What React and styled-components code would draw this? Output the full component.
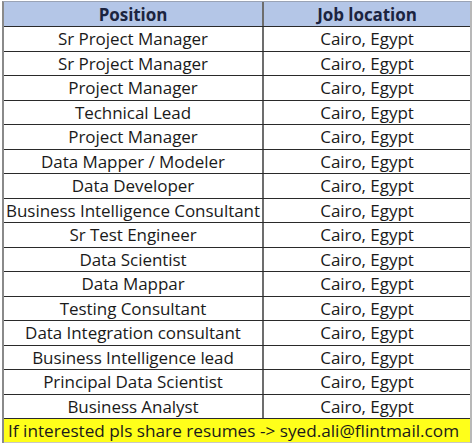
import styled, { createGlobalStyle } from "styled-components";

const GlobalStyle = createGlobalStyle`
  html, body {
    margin: 0;
    padding: 0;
    background: #ffffff;
  }
`;

const jobs = [
  "Sr Project Manager",
  "Sr Project Manager",
  "Project Manager",
  "Technical Lead",
  "Project Manager",
  "Data Mapper / Modeler",
  "Data Developer",
  "Business Intelligence Consultant",
  "Sr Test Engineer",
  "Data Scientist",
  "Data Mappar",
  "Testing Consultant",
  "Data Integration consultant",
  "Business Intelligence lead",
  "Principal Data Scientist",
  "Business Analyst",
];

const Sheet = styled.div`
  width: 470px;
  height: 444px;
  margin-left: 2px;
  padding-top: 1px;
  box-sizing: border-box;
  font-family: "Open Sans", "Liberation Sans", sans-serif;
  color: #1a1a1a;
`;

const Table = styled.div`
  border-left: 2px solid #8a8a8a;
  border-right: 2px solid #b8b8b8;
  border-top: 1px solid #9aa3b5;
`;

const Row = styled.div`
  display: grid;
  grid-template-columns: 258px 1fr;
  height: ${(p) => (p.$header ? 24 : 23.5)}px;
  border-bottom: 1px solid #2a2a2a;
  background: ${(p) => (p.$header ? "#b4c6e7" : "#ffffff")};
`;

const Cell = styled.div`
  display: flex;
  align-items: center;
  justify-content: center;
  font-size: 17px;
  font-weight: ${(p) => (p.$header ? 700 : 400)};
  color: ${(p) => (p.$header ? "#1b2440" : "#1a1a1a")};
  white-space: nowrap;
  letter-spacing: -0.05px;

  & + & {
    border-left: 2px solid #6d6d6d;
  }
`;

const Footer = styled.div`
  height: 23px;
  background: #ffff1a;
  display: flex;
  align-items: center;
  padding-left: 4px;
  font-size: 17.2px;
  color: #1a1a1a;
  white-space: nowrap;
  border-bottom: 1px solid #c8c8c8;
`;

export default function App() {
  return (
    <>
      <GlobalStyle />
      <Sheet>
        <Table>
          <Row $header>
            <Cell $header>Position</Cell>
            <Cell $header>Job location</Cell>
          </Row>
          {jobs.map((job, i) => (
            <Row key={i}>
              <Cell>{job}</Cell>
              <Cell>Cairo, Egypt</Cell>
            </Row>
          ))}
          <Footer>If interested pls share resumes -&gt; syed.ali@flintmail.com</Footer>
        </Table>
      </Sheet>
    </>
  );
}
